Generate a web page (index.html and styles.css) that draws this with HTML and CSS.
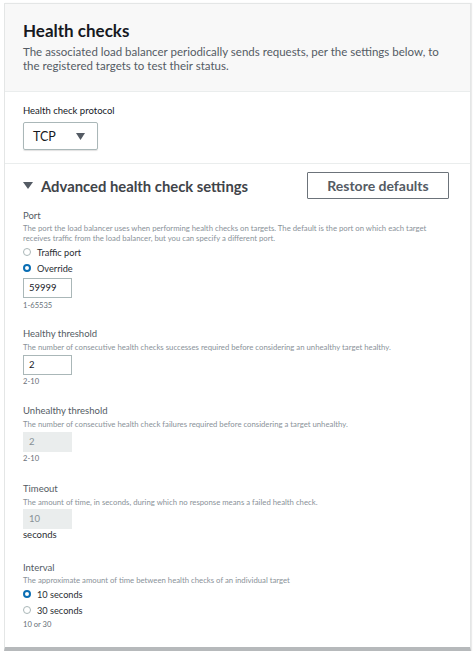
FILE: index.html
```html
<!DOCTYPE html>
<html lang="en">
<head>
<meta charset="utf-8">
<title>Health checks</title>
<link rel="stylesheet" href="styles.css">
</head>
<body>
<div class="card">
  <header class="card-header">
    <h1 class="title">Health checks</h1>
    <p class="lead">The associated load balancer periodically sends requests, per the settings below, to the registered targets to test their status.</p>
  </header>

  <section class="protocol">
    <div class="small-label">Health check protocol</div>
    <div class="select">
      <span class="select-value">TCP</span>
      <svg class="caret" width="9" height="7" viewBox="0 0 9 7"><path d="M0 0H9L4.5 7Z" fill="#545b64"/></svg>
    </div>
  </section>

  <section class="advanced">
    <div class="adv-head">
      <div class="adv-title">
        <svg class="adv-caret" width="10" height="7" viewBox="0 0 10 7"><path d="M0 0H10L5 7Z" fill="#545b64"/></svg>
        <span>Advanced health check settings</span>
      </div>
      <button class="btn">Restore defaults</button>
    </div>

    <div class="field f-port">
      <div class="label">Port</div>
      <div class="desc">The port the load balancer uses when performing health checks on targets. The default is the port on which each target receives traffic from the load balancer, but you can specify a different port.</div>
      <div class="radios">
        <div class="radio"><span class="dot"></span><span>Traffic port</span></div>
        <div class="radio"><span class="dot on"></span><span>Override</span></div>
      </div>
      <div class="input">59999</div>
      <div class="hint">1-65535</div>
    </div>

    <div class="field f-healthy">
      <div class="label">Healthy threshold</div>
      <div class="desc">The number of consecutive health checks successes required before considering an unhealthy target healthy.</div>
      <div class="input">2</div>
      <div class="hint">2-10</div>
    </div>

    <div class="field f-unhealthy">
      <div class="label">Unhealthy threshold</div>
      <div class="desc">The number of consecutive health check failures required before considering a target unhealthy.</div>
      <div class="input disabled">2</div>
      <div class="hint">2-10</div>
    </div>

    <div class="field f-timeout">
      <div class="label">Timeout</div>
      <div class="desc">The amount of time, in seconds, during which no response means a failed health check.</div>
      <div class="input disabled">10</div>
      <div class="unit">seconds</div>
    </div>

    <div class="field f-interval">
      <div class="label">Interval</div>
      <div class="desc">The approximate amount of time between health checks of an individual target</div>
      <div class="radios">
        <div class="radio"><span class="dot on"></span><span>10 seconds</span></div>
        <div class="radio"><span class="dot"></span><span>30 seconds</span></div>
      </div>
      <div class="hint">10 or 30</div>
    </div>
  </section>
</div>
</body>
</html>
```

FILE: styles.css
```css
* { box-sizing: border-box; }
html, body { margin: 0; padding: 0; background: #ffffff; }
body {
  font-family: Lato, "Liberation Sans", Arial, sans-serif;
  color: #16191f;
}
.card {
  margin: 3px 3px 0 4px;
  border: 1px solid #e4e6e6;
  border-bottom: 4px solid #b6b9bb;
  background: #ffffff;
  box-shadow: 1px 0 1px rgba(0,0,0,0.08);
}
.card-header {
  background: #f8f8f8;
  padding: 17px 25px 18px 18px;
  border-bottom: 1px solid #eaeded;
}
.title {
  margin: 0;
  font-size: 17px;
  line-height: 20px;
  font-weight: 700;
  color: #16191f;
}
.lead {
  margin: 4px 0 0;
  font-size: 11.5px;
  line-height: 14px;
  color: #545b64;
}
.protocol {
  padding: 13px 20px 13px 18px;
  border-bottom: 1px solid #eaeded;
}
.small-label {
  font-size: 9.5px;
  line-height: 12px;
  color: #16191f;
}
.select {
  margin-top: 5px;
  width: 75px;
  height: 28px;
  border: 1px solid #aab7b8;
  border-radius: 2px;
  display: flex;
  align-items: center;
  padding-left: 9px;
  box-shadow: 0 1px 1px rgba(0,0,0,0.12);
}
.select-value {
  font-size: 12.5px;
  color: #16191f;
  width: 43px;
}
.advanced {
  padding: 8px 21px 18px 18px;
}
.adv-head {
  display: flex;
  align-items: center;
  justify-content: space-between;
  height: 27px;
}
.adv-title {
  display: flex;
  align-items: center;
  gap: 8px;
  font-size: 14.8px;
  font-weight: 700;
  color: #3f4449;
}
.btn {
  width: 142px;
  height: 27px;
  border: 1px solid #6c737a;
  background: #ffffff;
  font-family: inherit;
  font-size: 14px;
  font-weight: 700;
  color: #545b64;
  padding: 0;
  border-radius: 1px;
}
.f-port { margin-top: 11px; }
.f-healthy { margin-top: 18px; }
.f-unhealthy { margin-top: 19px; }
.f-timeout { margin-top: 20px; }
.f-interval { margin-top: 21px; }
.label {
  font-size: 9.5px;
  line-height: 12px;
  color: #545b64;
}
.desc {
  margin-top: 2px;
  font-size: 7.75px;
  line-height: 10px;
  color: #8a9299;
}
.f-port .desc, .f-interval .desc { margin-top: 1px; }
.radios { margin-top: 1px; }
.radio {
  display: flex;
  align-items: center;
  height: 16px;
  font-size: 9.2px;
  color: #2a2e33;
}
.dot {
  width: 8px;
  height: 8px;
  border-radius: 50%;
  border: 1px solid #aab7b8;
  background: #ffffff;
  margin-right: 6px;
  flex: none;
}
.dot.on {
  border: 2.5px solid #0a6eb4;
  background: #ffffff;
}
.input {
  margin-top: 3px;
  width: 49px;
  height: 20px;
  border: 1px solid #aab7b8;
  font-size: 9.5px;
  line-height: 18px;
  padding-left: 5px;
  color: #16191f;
}
.f-port .input { margin-top: 2px; }
.f-timeout .input { margin-top: 2px; }
.input.disabled {
  background: #eaeded;
  border-color: #eaeded;
  color: #879196;
}
.hint {
  margin-top: 1px;
  font-size: 7.6px;
  line-height: 10px;
  color: #687078;
}
.f-port .hint { margin-top: 2px; }
.unit {
  margin-top: 0;
  font-size: 9.5px;
  line-height: 12px;
  color: #2a2e33;
}
```
